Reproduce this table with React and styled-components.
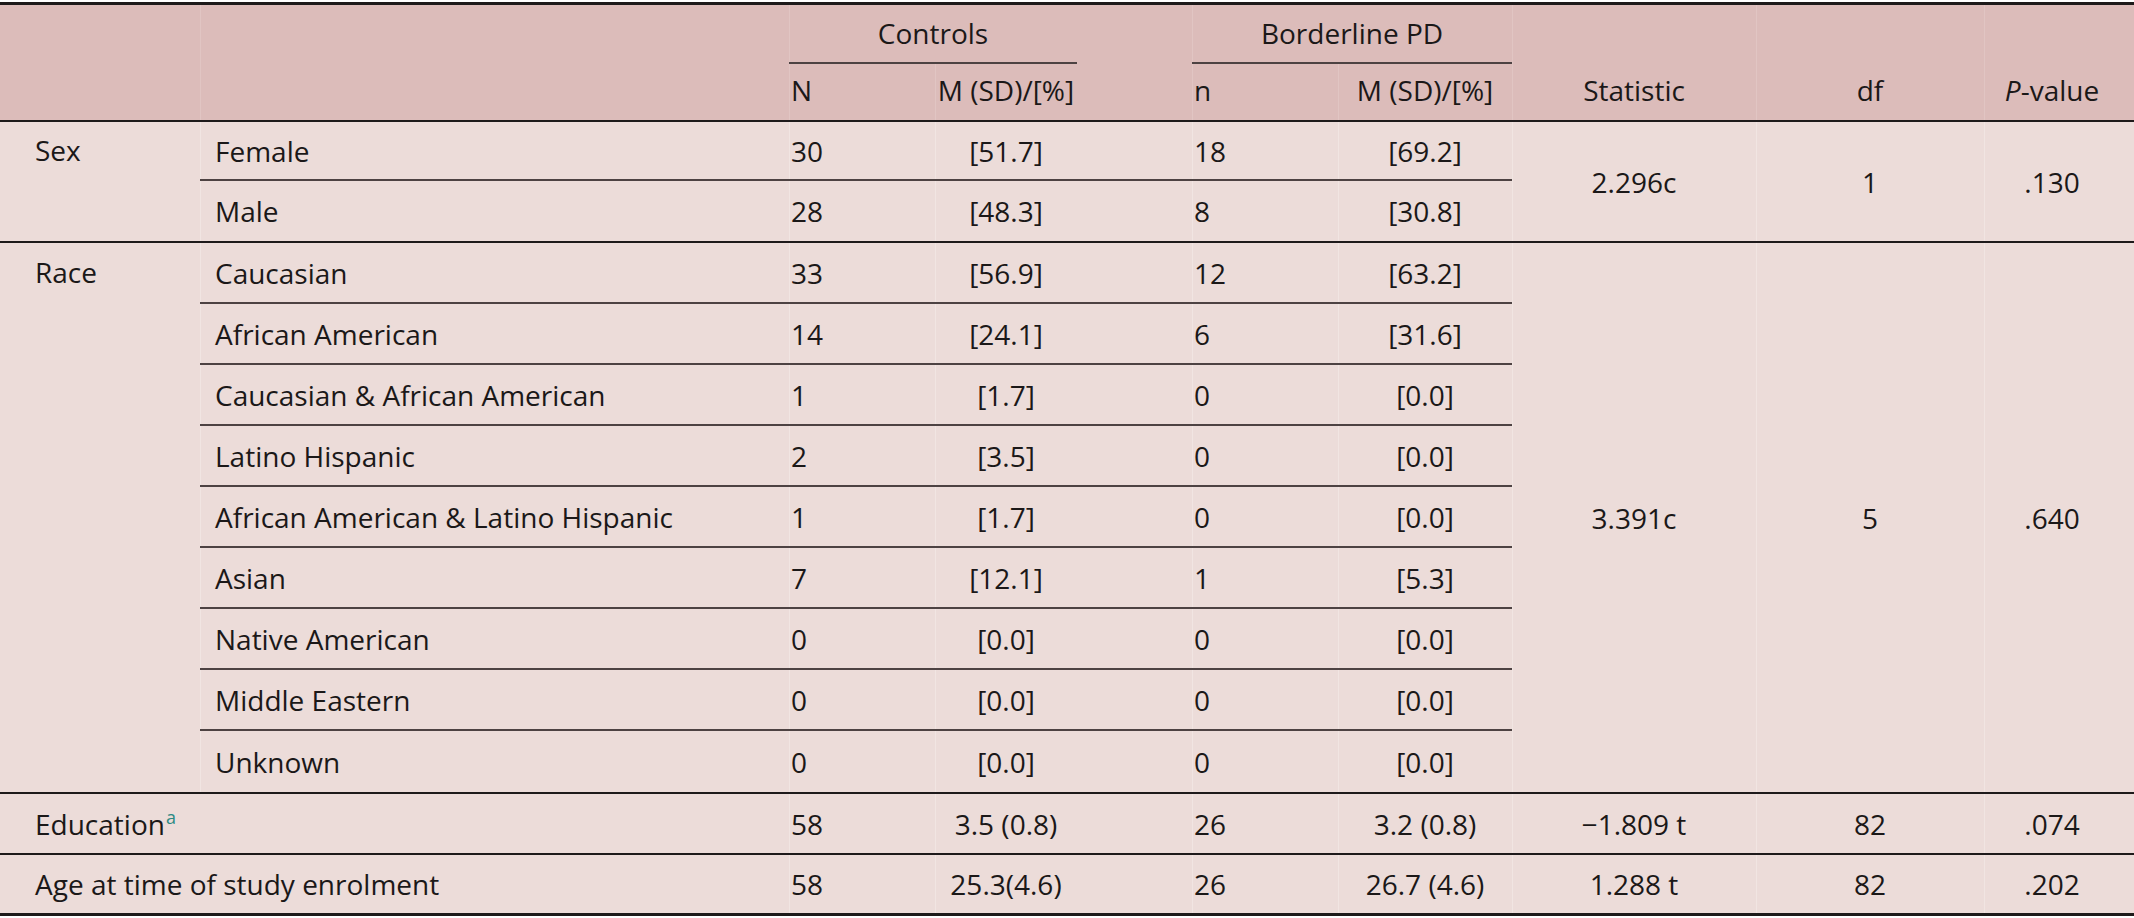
import React from 'react';
import styled, { createGlobalStyle, css } from 'styled-components';

const HEAD = '#dcbcba';
const BODY = '#ecdcd9';
const RULE = '#1e1a1a';
const SUB = '#4d4242';
const GAP = 115; // the Controls M (SD) column keeps an empty strip on its right

const GlobalStyle = createGlobalStyle`
  html, body {
    margin: 0;
    padding: 0;
    background: #ffffff;
  }
  body {
    padding-top: 2px;
  }
`;

const Table = styled.table`
  width: 100%;
  table-layout: fixed;
  border-collapse: separate;
  border-spacing: 0;
  border-top: 3px solid ${RULE};
  border-bottom: 3px solid ${RULE};
  font-family: "Open Sans", "Noto Sans", sans-serif;
  font-size: 28px;
  color: #1b1818;
`;

const Col = styled.col`
  width: ${p => (p.$w ? `${p.$w}px` : 'auto')};
`;

const Row = styled.tr`
  height: ${p => p.$h}px;
`;

const Th = styled.th`
  font-weight: 400;
  padding: 0 ${p => p.$pr || 0}px ${p => p.$pb || 0}px ${p => p.$pl || 0}px;
  background: ${HEAD};
  box-shadow: ${p => (p.$first ? 'none' : 'inset 1px 0 0 rgba(255,255,255,0.14)')};
  text-align: ${p => p.$align || 'left'};
  vertical-align: bottom;
  line-height: 38px;
  white-space: nowrap;
`;

const GroupTitle = styled.div`
  margin-right: ${p => p.$gap || 0}px;
  padding-bottom: 11px;
  line-height: 36px;
  text-align: center;
  border-bottom: 2px solid ${SUB};
`;

const Td = styled.td`
  padding: 0 ${p => p.$pr || 0}px 0 ${p => p.$pl || 0}px;
  background-color: ${BODY};
  box-shadow: ${p => (p.$first ? 'none' : 'inset 1px 0 0 rgba(255,255,255,0.25)')};
  text-align: ${p => p.$align || 'left'};
  vertical-align: ${p => p.$valign || 'middle'};
  line-height: ${p => p.$lh || 38}px;
  white-space: nowrap;
  border-top: ${p => (p.$top ? `2px solid ${RULE}` : 'none')};

  ${p => p.$sep && css`
    border-bottom: 2px solid ${SUB};
  `}
`;

const Note = styled.sup`
  color: #2c8a84;
  font-size: 18px;
  line-height: 0;
  vertical-align: 11px;
  margin-left: 1px;
`;

const groups = [
  {
    label: 'Sex',
    stat: '2.296c',
    df: '1',
    p: '.130',
    rows: [
      ['Female', '30', '[51.7]', '18', '[69.2]'],
      ['Male', '28', '[48.3]', '8', '[30.8]'],
    ],
    heights: [61, 60],
    lead: 57,
  },
  {
    label: 'Race',
    stat: '3.391c',
    df: '5',
    p: '.640',
    rows: [
      ['Caucasian', '33', '[56.9]', '12', '[63.2]'],
      ['African American', '14', '[24.1]', '6', '[31.6]'],
      ['Caucasian & African American', '1', '[1.7]', '0', '[0.0]'],
      ['Latino Hispanic', '2', '[3.5]', '0', '[0.0]'],
      ['African American & Latino Hispanic', '1', '[1.7]', '0', '[0.0]'],
      ['Asian', '7', '[12.1]', '1', '[5.3]'],
      ['Native American', '0', '[0.0]', '0', '[0.0]'],
      ['Middle Eastern', '0', '[0.0]', '0', '[0.0]'],
      ['Unknown', '0', '[0.0]', '0', '[0.0]'],
    ],
    heights: [63, 61, 61, 61, 61, 61, 61, 61, 61],
    lead: 59,
  },
];

const singles = [
  { label: 'Education', note: 'a', h: 61, vals: ['58', '3.5 (0.8)', '26', '3.2 (0.8)', '\u22121.809 t', '82', '.074'] },
  { label: 'Age at time of study enrolment', h: 60, vals: ['58', '25.3(4.6)', '26', '26.7 (4.6)', '1.288 t', '82', '.202'] },
];

const StatCells = ({ span, stat, df, p }) => (
  <>
    <Td rowSpan={span} $top $align="center">{stat}</Td>
    <Td rowSpan={span} $top $align="center">{df}</Td>
    <Td rowSpan={span} $top $align="center" $pr={14}>{p}</Td>
  </>
);

const GroupRows = ({ group }) =>
  group.rows.map((r, i) => {
    const first = i === 0;
    const sep = i < group.rows.length - 1;
    return (
      <Row key={r[0]} $h={group.heights[i]}>
        {first && (
          <Td rowSpan={group.rows.length} $first $top $pl={35} $valign="top" $lh={group.lead}>
            {group.label}
          </Td>
        )}
        <Td $top={first} $sep={sep} $pl={15}>{r[0]}</Td>
        <Td $top={first} $sep={sep} $pl={2}>{r[1]}</Td>
        <Td $top={first} $sep={sep} $pr={GAP} $align="center">{r[2]}</Td>
        <Td $top={first} $sep={sep} $pl={2}>{r[3]}</Td>
        <Td $top={first} $sep={sep} $align="center">{r[4]}</Td>
        {first && (
          <StatCells span={group.rows.length} stat={group.stat} df={group.df} p={group.p} />
        )}
      </Row>
    );
  });

const App = () => (
  <>
    <GlobalStyle />
    <Table>
      <colgroup>
        <Col $w={200} />
        <Col $w={589} />
        <Col $w={146} />
        <Col $w={257} />
        <Col $w={146} />
        <Col $w={174} />
        <Col $w={244} />
        <Col $w={228} />
        <Col />
      </colgroup>
      <thead>
        <Row $h={59}>
          <Th $first />
          <Th />
          <Th colSpan={2}>
            <GroupTitle $gap={GAP}>Controls</GroupTitle>
          </Th>
          <Th colSpan={2}>
            <GroupTitle>Borderline PD</GroupTitle>
          </Th>
          <Th rowSpan={2} $align="center" $pb={11}>Statistic</Th>
          <Th rowSpan={2} $align="center" $pb={11}>df</Th>
          <Th rowSpan={2} $align="center" $pr={14} $pb={11}><i>P</i>-value</Th>
        </Row>
        <Row $h={56}>
          <Th $first />
          <Th />
          <Th $pl={2} $pb={11}>N</Th>
          <Th $pr={GAP} $pb={11} $align="center">M (SD)/[%]</Th>
          <Th $pl={2} $pb={11}>n</Th>
          <Th $pb={11} $align="center">M (SD)/[%]</Th>
        </Row>
      </thead>
      <tbody>
        {groups.map(g => (
          <GroupRows key={g.label} group={g} />
        ))}
        {singles.map(s => (
          <Row key={s.label} $h={s.h}>
            <Td colSpan={2} $first $top $pl={35}>
              {s.label}
              {s.note && <Note>{s.note}</Note>}
            </Td>
            <Td $top $pl={2}>{s.vals[0]}</Td>
            <Td $top $pr={GAP} $align="center">{s.vals[1]}</Td>
            <Td $top $pl={2}>{s.vals[2]}</Td>
            <Td $top $align="center">{s.vals[3]}</Td>
            <StatCells span={1} stat={s.vals[4]} df={s.vals[5]} p={s.vals[6]} />
          </Row>
        ))}
      </tbody>
    </Table>
  </>
);

export default App;
